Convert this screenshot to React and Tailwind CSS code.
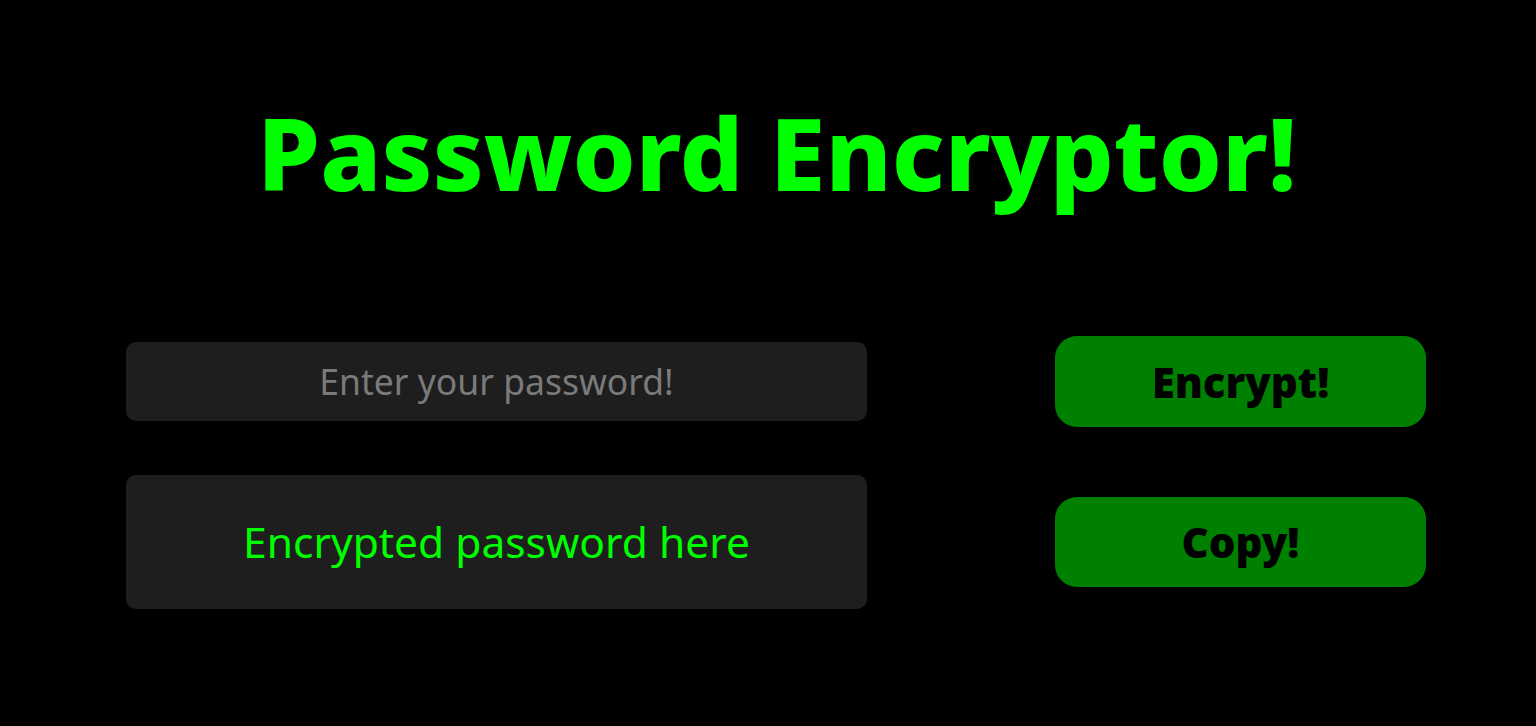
import React, { useState } from 'react';

export default function App() {
  const [password, setPassword] = useState('');
  const [encrypted, setEncrypted] = useState('');

  const encrypt = () => {
    if (!password) return;
    setEncrypted(btoa(password));
  };

  return (
    <div className="min-h-screen w-full bg-black font-['Noto_Sans','Open_Sans',sans-serif]">
      <h1 className="pt-[92px] pl-[18px] text-center text-[100.5px] font-extrabold leading-[1.2] text-[#00ff00]">
        Password Encryptor!
      </h1>

      <div className="mt-[123px] flex flex-col gap-[48px] pl-[126px]">
        {/* Ligne 1 : saisie + bouton */}
        <div className="flex items-center">
          <input
            type="text"
            value={password}
            onChange={(e) => setPassword(e.target.value)}
            placeholder="Enter your password!"
            className="h-[79px] w-[741px] rounded-[10px] bg-[#1e1e1e] text-center text-[35.5px] text-white placeholder:text-[#7a7a7a] outline-none"
          />
          <button
            onClick={encrypt}
            className="ml-[188px] h-[91px] w-[371px] rounded-[22px] bg-[#008000] text-[42px] font-black text-black"
          >
            Encrypt!
          </button>
        </div>

        {/* Ligne 2 : résultat + copier */}
        <div className="flex items-center">
          <div className="flex h-[134px] w-[741px] items-center justify-center rounded-[10px] bg-[#1e1e1e] text-[42.5px] text-[#00ff00]">
            {encrypted || 'Encrypted password here'}
          </div>
          <button
            onClick={() => navigator.clipboard?.writeText(encrypted)}
            className="ml-[188px] h-[90px] w-[371px] rounded-[22px] bg-[#008000] text-[42px] font-black text-black"
          >
            Copy!
          </button>
        </div>
      </div>
    </div>
  );
}
